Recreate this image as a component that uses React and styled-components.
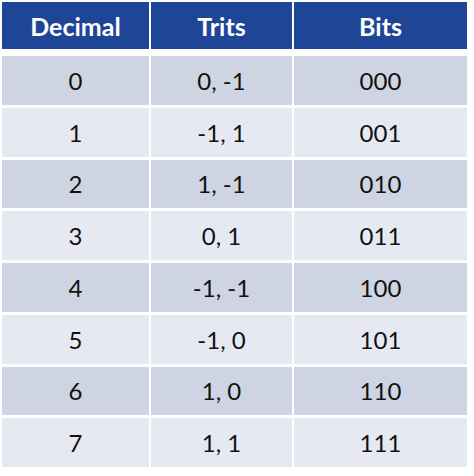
import React from "react";
import styled, { createGlobalStyle } from "styled-components";

const Global = createGlobalStyle`
  html, body { margin: 0; padding: 0; background: #ffffff; }
  body { font-family: Lato, "Open Sans", sans-serif; }
`;

const Page = styled.div`
  width: 474px;
  height: 476px;
  padding: 2px 0 0 2px;
  box-sizing: border-box;
`;

const Table = styled.div`
  display: grid;
  grid-template-columns: 147px 141px 173px;
  grid-template-rows: 47px 1px repeat(8, 48.75px);
  column-gap: 2px;
  row-gap: 3px;
  width: 465px;
`;

const HeadCell = styled.div`
  background: #1f4597;
  color: #ffffff;
  font-weight: 700;
  font-size: 25px;
  display: flex;
  align-items: center;
  justify-content: center;
`;

const Spacer = styled.div`
  grid-column: 1 / -1;
`;

const Cell = styled.div`
  background: ${(p) => (p.$band ? "#cfd4e2" : "#e7e9f2")};
  color: #111111;
  font-size: 24px;
  display: flex;
  align-items: center;
  justify-content: center;
`;

const rows = [
  ["0", "0, -1", "000"],
  ["1", "-1, 1", "001"],
  ["2", "1, -1", "010"],
  ["3", "0, 1", "011"],
  ["4", "-1, -1", "100"],
  ["5", "-1, 0", "101"],
  ["6", "1, 0", "110"],
  ["7", "1, 1", "111"],
];

export default function App() {
  return (
    <>
      <Global />
      <Page>
        <Table>
          <HeadCell>Decimal</HeadCell>
          <HeadCell>Trits</HeadCell>
          <HeadCell>Bits</HeadCell>
          <Spacer />
          {rows.map((r, i) =>
            r.map((v, j) => (
              <Cell key={`${i}-${j}`} $band={i % 2 === 0}>
                {v}
              </Cell>
            ))
          )}
        </Table>
      </Page>
    </>
  );
}
